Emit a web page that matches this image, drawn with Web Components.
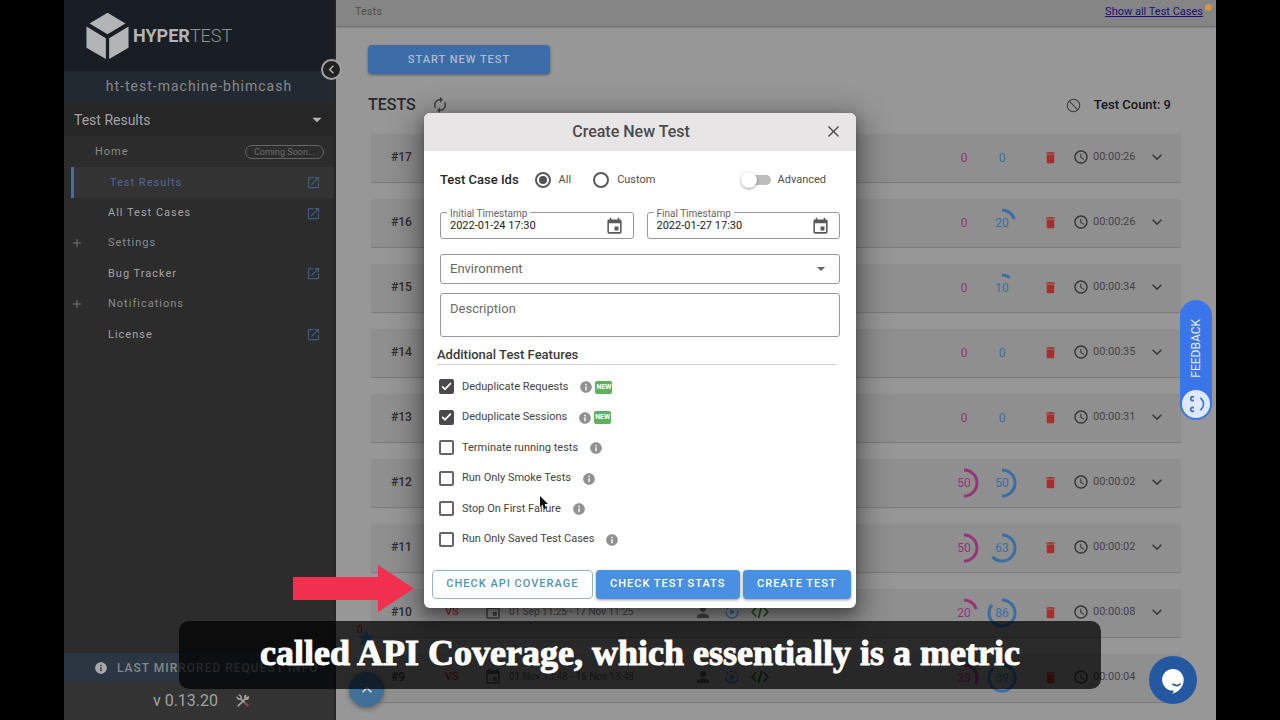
<!DOCTYPE html>
<html lang="en">
<head>
<meta charset="utf-8">
<meta name="viewport" content="width=device-width, initial-scale=1">
<title>HyperTest – Tests</title>
<style>
  html, body { margin: 0; height: 100%; background: #000; }
  body { font-family: Roboto, "Liberation Sans", sans-serif; font-size: 11px; line-height: 16px; overflow: hidden; }
</style>
</head>
<body>
<ht-app></ht-app>

<script>
const define = (name, html, setup) => {
  const template = document.createElement('template');
  template.innerHTML = html;
  customElements.define(name, class extends HTMLElement {
    connectedCallback() {
      if (this.shadowRoot) return;
      const root = this.attachShadow({ mode: 'open' });
      root.append(template.content.cloneNode(true));
      if (setup) setup(this, root);
    }
  });
};

/* ---------- icons ---------- */
const ICONS = {
  open: '<path d="M19 19H5V5h7V3H5c-1.11 0-2 .9-2 2v14c0 1.1.89 2 2 2h14c1.1 0 2-.9 2-2v-7h-2v7zM14 3v2h3.59l-9.83 9.83 1.41 1.41L19 6.41V10h2V3h-7z"/>',
  refresh: '<path d="M12 6v3l4-4-4-4v3c-4.42 0-8 3.58-8 8 0 1.57.46 3.03 1.24 4.26L6.7 14.8c-.45-.83-.7-1.79-.7-2.8 0-3.31 2.69-6 6-6zm6.76 1.74L17.3 9.2c.44.84.7 1.79.7 2.8 0 3.31-2.69 6-6 6v-3l-4 4 4 4v-3c4.42 0 8-3.58 8-8 0-1.57-.46-3.03-1.24-4.26z"/>',
  trash: '<path d="M6 19c0 1.1.9 2 2 2h8c1.1 0 2-.9 2-2V7H6v12zM19 4h-3.5l-1-1h-5l-1 1H5v2h14V4z"/>',
  clock: '<path d="M11.99 2C6.47 2 2 6.48 2 12s4.47 10 9.99 10C17.52 22 22 17.52 22 12S17.52 2 11.99 2zM12 20c-4.42 0-8-3.58-8-8s3.58-8 8-8 8 3.58 8 8-3.58 8-8 8zm.5-13H11v6l5.25 3.15.75-1.23-4.5-2.67z"/>',
  down: '<path d="M16.59 8.59L12 13.17 7.41 8.59 6 10l6 6 6-6z"/>',
  up: '<path d="M12 8l-6 6 1.41 1.41L12 10.83l4.59 4.58L18 14z"/>',
  left: '<path d="M15.41 7.41L14 6l-6 6 6 6 1.41-1.41L10.83 12z"/>',
  caret: '<path d="M5 8.500h14l-7 7z"/>',
  info: '<path d="M12 2C6.480 2 2 6.480 2 12s4.480 10 10 10 10-4.480 10-10S17.520 2 12 2zm1.200 15.500h-2.400v-7h2.400v7zm0-8.700h-2.400V6.500h2.400v2.300z"/>',
  calendar: '<path d="M17 12h-5v5h5v-5zM16 1v2H8V1H6v2H5c-1.11 0-1.990.9-1.990 2L3 19c0 1.100.890 2 2 2h14c1.100 0 2-.900 2-2V5c0-1.100-.900-2-2-2h-1V1h-2zm3 18H5V8h14v11z"/>',
  person: '<path d="M12 12c2.210 0 4-1.790 4-4s-1.790-4-4-4-4 1.790-4 4 1.790 4 4 4zm0 2c-2.670 0-8 1.340-8 4v2h16v-2c0-2.660-5.330-4-8-4z"/>',
  close: '<path d="M19 6.410L17.590 5 12 10.590 6.410 5 5 6.410 10.590 12 5 17.590 6.410 19 12 13.410 17.590 19 19 17.590 13.410 12z"/>',
  ban: '<g fill="none" stroke="currentColor" stroke-width="1.800"><circle cx="12" cy="12" r="10"/><path d="M5 5l14 14"/></g>',
  star: '<path d="M12 17.270L18.180 21l-1.640-7.030L22 9.240l-7.190-.610L12 2 9.190 8.630 2 9.240l5.460 4.730L5.820 21z"/>',
  plus: '<path d="M11 4h2v7h7v2h-7v7h-2v-7H4v-2h7z"/>',
  play: '<circle cx="12" cy="12" r="9" fill="none" stroke="currentColor" stroke-width="2" stroke-dasharray="28.300 3 4 3 4 3 4 3 4.200"/><path d="M9.500 7.500v9l7-4.500z"/>',
  code: '<path d="M7 6l-5.500 6L7 18M17 6l5.500 6-5.500 6M14 4l-4 16" fill="none" stroke="currentColor" stroke-width="2.200"/>',
  tools: '<g fill="none" stroke="currentColor" stroke-width="2.400"><path d="M8 8l9 9"/><path d="M3 5.500a4 4 0 0 0 5.500 3.500M5.500 3a4 4 0 0 1 3.500 5.500M21 5.500L16 8 4 20"/><path d="M17 3.500a4 4 0 0 0-2 5M20.500 7a4 4 0 0 1-5 2"/></g><path d="M14.500 14.500l5 5" stroke="#8e4442" stroke-width="4"/>',
  chat: '<path d="M12 2.500a9.300 9.300 0 1 0 0 18.600c.8 0 .8 1.400-.7 2.700 3.500-.7 9.900-4.400 9.900-12A9.300 9.300 0 0 0 12 2.500z"/><path d="M12 15.700c2 1.400 4.300 1.400 6-.1" fill="none" stroke="#2459a2" stroke-width="1.500" stroke-linecap="round"/>',
  smile: '<circle cx="12" cy="12" r="11.200" fill="#dfe9fc"/><g fill="none" stroke="#3b70cf" stroke-width="1.400" stroke-linecap="round"><path d="M9.800 6.300a1.500 1.500 0 1 0 0 2.800M9.800 14.900a1.500 1.500 0 1 0 0 2.800M16 7.500c2.600 2.700 2.600 6.300 0 9"/></g>',
  cube: '<path d="M12 .8l8.800 5.300L12 11.400 3.200 6.100zM1.700 7.600l9.500 5.700v10.200L1.700 18zM22.300 7.600V18l-9.500 5.500V13.300z"/>'
};
define('ht-icon', `
<style>
  :host { display: block; flex: none; width: var(--size, 16px); height: var(--size, 16px); }
  svg { display: block; width: 100%; height: 100%; fill: currentColor; }
</style>
<svg viewBox="0 0 24 24" aria-hidden="true"></svg>`,
(el, root) => { root.querySelector('svg').innerHTML = ICONS[el.getAttribute('name')]; });

/* ---------- button ---------- */
define('ht-button', `
<style>
  :host { display: block; }
  button {
    box-sizing: border-box; width: 100%; height: 29px; padding: 0 13px; border: 1px solid transparent; border-radius: 4px;
    background: var(--bg, #4a90e2); color: var(--fg, #fff); font: 500 11px/16px Roboto, sans-serif; letter-spacing: 1px;
    text-transform: uppercase; white-space: nowrap; box-shadow: 0 1px 3px rgba(0,0,0,.4);
  }
  :host([outlined]) button { background: #fff; color: #4f93b8; border-color: #8fb9c9; box-shadow: none; }
</style>
<button type="button"><slot></slot></button>`);

/* ---------- sidebar ---------- */
define('ht-nav-item', `
<style>
  :host { display: block; color: #8b8b8b; }
  a { box-sizing: border-box; height: 100%; display: flex; align-items: center; padding: 0 13px 0 7px; color: inherit; text-decoration: none; letter-spacing: 1px; font-size: 11px; }
  .lead { width: 37px; }
  .lead ht-icon { --size: 12px; color: #747474; }
  .text { flex: 1; }
  .open { --size: 15px; color: #3a5c85; }
  :host([bright]) { color: #a4a4a4; }
  :host([active]) { color: #54669b; background: #333; margin-left: 7px; border-left: 3px solid #4c6a9b; }
  :host([active]) a { padding-left: 0; }
  :host([active]) .lead { width: 36px; }
  :host([top]) .lead { width: 24px; }
  .pill { border: 1px solid #666; border-radius: 7px; padding: 0 8px; font-size: 9px; line-height: 12px; letter-spacing: 0; color: #6c6c6c; margin-right: -3px; }
</style>
<a href="#"><span class="lead"></span><span class="text"><slot></slot></span></a>`,
(el, root) => {
  const link = root.querySelector('a');
  if (el.hasAttribute('group')) root.querySelector('.lead').innerHTML = '<ht-icon name="plus"></ht-icon>';
  if (el.hasAttribute('open')) link.insertAdjacentHTML('beforeend', '<ht-icon class="open" name="open"></ht-icon>');
  if (el.hasAttribute('note')) {
    link.insertAdjacentHTML('beforeend', '<span class="pill"></span>');
    link.lastChild.textContent = el.getAttribute('note');
  }
});

define('ht-sidebar', `
<style>
  :host { display: flex; flex-direction: column; box-sizing: border-box; width: 272px; flex: none; background: #2c2c2c; border-right: 2px solid #262626; color: #a5a5a5; position: relative; }
  .brand { display: flex; align-items: center; gap: 1px; height: 71px; padding-left: 19px; background: #191e25; color: #b2b4b6; font-size: 18px; line-height: 24px; }
  .brand ht-icon { --size: 49px; }
  .brand b { font-weight: 700; }
  .brand span { font-weight: 300; color: #8f9296; }
  .machine { height: 30px; padding-bottom: 2px; display: flex; align-items: center; justify-content: center; background: #222930; color: #85898d; font-size: 14px; letter-spacing: 1px; }
  .section { display: flex; align-items: center; justify-content: space-between; width: 100%; height: 33px; border: 0; padding: 0 9px 0 10px; background: #262626; color: #a2a2a2; font: 14px/16px Roboto, sans-serif; }
  .section ht-icon { color: #b5b5b5; }
  nav { display: grid; grid-auto-rows: 1fr; height: 213px; margin-top: 1px; }
  .mirror { margin-top: auto; display: flex; align-items: center; gap: 9px; width: 100%; height: 29px; border: 0; padding: 0 30px; background: #2b3642; color: #83888d; font: 500 12px/16px Roboto, sans-serif; letter-spacing: 1px; white-space: nowrap; }
  .mirror ht-icon { --size: 14px; color: #a8a8a8; }
  .version { height: 38px; padding-left: 6px; display: flex; align-items: center; justify-content: center; gap: 17px; background: #333; color: #a2a2a2; font-size: 16px; }
  .toggle { position: absolute; right: -8px; top: 59px; box-sizing: border-box; width: 21px; height: 21px; padding: 0; border: 2px solid #a2a2a2; border-radius: 50%; background: #222; color: #b5b5b5; display: grid; place-items: center; z-index: 2; }
  .toggle ht-icon { --size: 17px; }
</style>
<div class="brand"><ht-icon name="cube"></ht-icon><div><b>HYPER</b><span>TEST</span></div></div>
<div class="machine">ht-test-machine-bhimcash</div>
<button class="section" type="button">Test Results<ht-icon name="caret"></ht-icon></button>
<nav>
  <ht-nav-item top note="Coming Soon...">Home</ht-nav-item>
  <ht-nav-item active open>Test Results</ht-nav-item>
  <ht-nav-item bright open>All Test Cases</ht-nav-item>
  <ht-nav-item group>Settings</ht-nav-item>
  <ht-nav-item bright open>Bug Tracker</ht-nav-item>
  <ht-nav-item group>Notifications</ht-nav-item>
  <ht-nav-item bright open>License</ht-nav-item>
</nav>
<button class="mirror" type="button"><ht-icon name="info"></ht-icon>LAST MIRRORED REQUEST INFO</button>
<div class="version">v 0.13.20<ht-icon name="tools"></ht-icon></div>
<button class="toggle" type="button" aria-label="Collapse sidebar"><ht-icon name="left"></ht-icon></button>`);

/* ---------- test list ---------- */
define('ht-donut', `
<style>
  :host { display: grid; width: 30px; height: 30px; place-items: center; font-size: 12px; }
  svg, span { grid-area: 1 / 1; }
  svg { width: 30px; height: 30px; fill: none; stroke: currentColor; stroke-width: 3; }
</style>
<svg viewBox="0 0 30 30" aria-hidden="true"><circle cx="15" cy="15" r="13" pathLength="100" transform="rotate(-90 15 15)"/></svg>
<span></span>`,
(el, root) => {
  const v = el.getAttribute('value');
  root.querySelector('span').textContent = v;
  const ring = root.querySelector('circle');
  if (v === '0') ring.remove();
  else ring.setAttribute('stroke-dasharray', v + ' 100');
});

define('ht-test-row', `
<style>
  :host { display: grid; grid-template-columns: 54px 42px 22px 185px 30px 27px 1fr 38px 52px 34px 20px 54px 22px; align-items: center; box-sizing: border-box;
    height: 49px; padding: 0 12px 2px 20px; background: #8f8f8f; border-bottom: 1px solid #7b7b7b; border-radius: 2px; color: #444; box-shadow: 0 0 2px rgba(0,0,0,.06); }
  .id { font-weight: 500; font-size: 12px; color: #2d2d2d; }
  .vs { font-weight: 500; color: #8c2b2b; }
  .cal { --size: 18px; margin-left: -3px; }
  .date { white-space: nowrap; font-size: 10px; }
  .person { --size: 18px; }
  .play { --size: 16px; color: #2f61a8; }
  .code { --size: 18px; color: #1f5216; }
  .fail ht-donut { color: #96337a; }
  .pass ht-donut { color: #386da6; }
  .trash { --size: 15px; color: #a52f2d; margin-left: 4px; }
  .clock { --size: 16px; color: #333; }
  .more { --size: 20px; color: #3b3b3b; }
  button { all: unset; display: block; }
  ht-donut { margin-top: 2px; }
</style>
<span class="id"></span>
<span class="vs"></span>
<span class="calbox"></span>
<span class="date"></span>
<span class="a"></span><span class="b"></span><span class="c"></span>
<span class="fail"></span>
<span class="pass"></span>
<button type="button" aria-label="Delete test"><ht-icon class="trash" name="trash"></ht-icon></button>
<ht-icon class="clock" name="clock"></ht-icon>
<span class="time"></span>
<button type="button" aria-label="Show details"><ht-icon class="more" name="down"></ht-icon></button>`,
(el, root) => {
  const $ = s => root.querySelector(s);
  $('.id').textContent = '#' + el.getAttribute('number');
  $('.time').textContent = el.getAttribute('time');
  for (const kind of ['fail', 'pass']) {
    const donut = document.createElement('ht-donut');
    donut.setAttribute('value', el.getAttribute(kind));
    $('.' + kind).append(donut);
  }
  if (el.hasAttribute('dates')) {
    $('.vs').textContent = 'VS';
    $('.date').textContent = el.getAttribute('dates');
    $('.calbox').innerHTML = '<ht-icon class="cal" name="calendar"></ht-icon>';
    $('.a').innerHTML = '<ht-icon class="person" name="person"></ht-icon>';
    $('.b').innerHTML = '<ht-icon class="play" name="play"></ht-icon>';
    $('.c').innerHTML = '<ht-icon class="code" name="code"></ht-icon>';
  }
});

define('ht-main', `
<style>
  :host { display: block; flex: 1; min-width: 0; background: #979797; color: #2a2a2a; }
  header { display: flex; justify-content: space-between; align-items: center; height: 26px; padding: 0 13px 3px 19px; box-sizing: border-box; background: #858585; box-shadow: 0 1px 2px rgba(0,0,0,.35); color: #505050; }
  header a { color: #1a1077; }
  .start { width: 182px; margin: 19px 0 0 32px; --bg: #3d6da8; --fg: #a9bcd2; }
  .head { display: flex; align-items: center; margin: 19px 45px 17px 32px; height: 24px; }
  h1 { margin: 0 15px 0 0; font-size: 16px; line-height: 24px; font-weight: 500; }
  .head ht-icon { color: #3f3f3f; --size: 18px; }
  .head .ban { margin-left: auto; --size: 15px; margin-right: 13px; }
  .count { font-size: 13px; font-weight: 500; color: #161616; }
  .list { display: grid; gap: 16px; margin: 0 35px; }
</style>
<header><span>Tests</span><a href="#">Show all Test Cases</a></header>
<ht-button class="start">Start new test</ht-button>
<div class="head"><h1>TESTS</h1><ht-icon name="refresh"></ht-icon><ht-icon class="ban" name="ban"></ht-icon><span class="count">Test Count: 9</span></div>
<div class="list">
  <ht-test-row number="17" fail="0" pass="0" time="00:00:26"></ht-test-row>
  <ht-test-row number="16" fail="0" pass="20" time="00:00:26"></ht-test-row>
  <ht-test-row number="15" fail="0" pass="10" time="00:00:34"></ht-test-row>
  <ht-test-row number="14" fail="0" pass="0" time="00:00:35"></ht-test-row>
  <ht-test-row number="13" fail="0" pass="0" time="00:00:31"></ht-test-row>
  <ht-test-row number="12" fail="50" pass="50" time="00:00:02"></ht-test-row>
  <ht-test-row number="11" fail="50" pass="63" time="00:00:02"></ht-test-row>
  <ht-test-row number="10" fail="20" pass="86" time="00:00:08" dates="01 Sep 11:25 - 17 Nov 11:25"></ht-test-row>
  <ht-test-row number="9" fail="33" pass="89" time="00:00:04" dates="01 Nov 13:48 - 16 Nov 13:48"></ht-test-row>
</div>`);

/* ---------- dialog ---------- */
define('ht-time-field', `
<style>
  :host { display: block; flex: 1; min-width: 0; }
  .box { position: relative; box-sizing: border-box; display: flex; align-items: center; height: 27px; padding: 0 9px; border: 1px solid #999; border-radius: 3px; }
  label { position: absolute; left: 6px; top: -5px; padding: 0 3px; background: #fff; color: #666; font-size: 10px; line-height: 11px; }
  input { flex: 1; min-width: 0; position: relative; border: 0; padding: 2px 0 0; background: none; color: #222; font: 11px/16px Roboto, sans-serif; outline: 0; }
  ht-icon { --size: 19px; color: #5a5a5a; margin: 3px 0 0; }
</style>
<div class="box"><label for="t"></label><input id="t" type="text"><ht-icon name="calendar"></ht-icon></div>`,
(el, root) => {
  root.querySelector('label').textContent = el.getAttribute('label');
  root.querySelector('input').setAttribute('value', el.getAttribute('value'));
});

define('ht-feature', `
<style>
  :host { display: flex; align-items: center; color: #444; }
  input { appearance: none; flex: none; box-sizing: border-box; width: 15px; height: 15px; margin: 0 8px 0 0; border: 2px solid #666; border-radius: 2px; display: grid; place-items: center; }
  input:checked { background: #4a4a4c; border-color: #4a4a4c; }
  input:checked::before { content: ""; width: 11px; height: 11px; background: #fff; clip-path: polygon(5% 52%, 16% 41%, 36% 61%, 84% 12%, 95% 23%, 36% 83%); }
  ht-icon { --size: 14px; color: #919191; margin: 1px 0 0 11px; }
  .new { margin: 1px 0 0 2px; width: 17px; height: 13px; border-radius: 2px; background: #5db25b; color: #fff; font-size: 7px; line-height: 13px; font-weight: 700; text-align: center; }
</style>
<input id="c" type="checkbox"><label for="c"><slot></slot></label><ht-icon name="info"></ht-icon>`,
(el, root) => {
  if (el.hasAttribute('checked')) root.querySelector('input').setAttribute('checked', '');
  if (el.hasAttribute('new')) root.append(Object.assign(document.createElement('span'), { className: 'new', textContent: 'NEW' }));
});

define('ht-dialog', `
<style>
  :host { display: block; width: 432px; max-width: 100%; border-radius: 6px; background: #fff; overflow: hidden; box-shadow: 0 9px 30px 8px rgba(0,0,0,.32), 0 5px 12px rgba(0,0,0,.3); color: #505050; }
  header { display: flex; align-items: center; height: 38px; padding: 0 13px 0 14px; background: #e7e5e6; }
  h2 { flex: 1; margin: 0; text-align: center; font-size: 16px; line-height: 24px; font-weight: 500; color: #4b4b4b; }
  header button { all: unset; }
  header ht-icon { --size: 19px; color: #555; }
  form { margin: 0; padding: 14px 16px 0; }
  .ids { display: flex; align-items: center; height: 30px; }
  .ids b { font-weight: 500; font-size: 13px; color: #262626; margin-right: 16px; }
  input[type=radio] { appearance: none; box-sizing: border-box; width: 16px; height: 16px; margin: 0 8px 0 0; border: 2px solid #5a5a5a; border-radius: 50%; display: grid; place-items: center; }
  input[type=radio]:checked::before { content: ""; width: 8px; height: 8px; border-radius: 50%; background: #505050; }
  .all { margin-right: 22px; }
  .switch { appearance: none; width: 26px; height: 10px; border-radius: 5px; background: #bdbdbd; margin: 0 7px 0 auto; position: relative; }
  .switch::before { content: ""; position: absolute; left: -4px; top: -3px; width: 16px; height: 16px; border-radius: 50%; background: #fff; box-shadow: 0 1px 3px rgba(0,0,0,.4); }
  .adv { margin-right: 14px; }
  .times { display: flex; gap: 13px; margin-top: 17px; }
  select, textarea { display: block; box-sizing: border-box; width: 100%; border: 1px solid #999; border-radius: 3px; background: #fff; color: #666; font: 13px/16px Roboto, sans-serif; outline: 0; padding: 0 9px; }
  .select { margin-top: 15px; display: grid; align-items: center; }
  .select > * { grid-area: 1 / 1; }
  .select ht-icon { justify-self: end; margin-right: 12px; --size: 14px; pointer-events: none; color: #666; }
  select { appearance: none; height: 30px; }
  textarea { margin-top: 9px; height: 44px; padding-top: 7px; resize: none; overflow: hidden; }
  textarea::placeholder { color: #6c6c6c; opacity: 1; }
  h3 { margin: 9px 0 0 -3px; width: 400px; max-width: 100%; height: 18px; border-bottom: 1px solid #d4d4d4; font-size: 13px; line-height: 17px; font-weight: 500; color: #3a3a3a; }
  .features { display: grid; grid-auto-rows: 1fr; height: 183px; margin: 7px 0 0 -1px; }
  .actions { display: flex; gap: 3px; margin: 15px -11px 0 -8px; padding-bottom: 9px; }
  .actions ht-button { flex: auto; }
</style>
<header><h2>Create New Test</h2><button type="button" aria-label="Close"><ht-icon name="close"></ht-icon></button></header>
<form>
  <div class="ids">
    <b>Test Case Ids</b>
    <input type="radio" name="ids" id="all" checked><label for="all" class="all">All</label>
    <input type="radio" name="ids" id="custom"><label for="custom">Custom</label>
    <input type="checkbox" role="switch" class="switch" id="adv"><label for="adv" class="adv">Advanced</label>
  </div>
  <div class="times">
    <ht-time-field label="Initial Timestamp" value="2022-01-24 17:30"></ht-time-field>
    <ht-time-field label="Final Timestamp" value="2022-01-27 17:30"></ht-time-field>
  </div>
  <div class="select"><select aria-label="Environment"><option>Environment</option></select><ht-icon name="caret"></ht-icon></div>
  <textarea aria-label="Description" placeholder="Description"></textarea>
  <h3>Additional Test Features</h3>
  <div class="features">
    <ht-feature checked new>Deduplicate Requests</ht-feature>
    <ht-feature checked new>Deduplicate Sessions</ht-feature>
    <ht-feature>Terminate running tests</ht-feature>
    <ht-feature>Run Only Smoke Tests</ht-feature>
    <ht-feature>Stop On First Failure</ht-feature>
    <ht-feature>Run Only Saved Test Cases</ht-feature>
  </div>
  <div class="actions">
    <ht-button outlined>Check API Coverage</ht-button>
    <ht-button>Check Test Stats</ht-button>
    <ht-button>Create Test</ht-button>
  </div>
</form>`);

/* ---------- floating items ---------- */
define('ht-feedback', `
<style>
  :host { display: block; }
  button { display: flex; align-items: center; justify-content: space-between; flex-direction: column; box-sizing: border-box; width: 32px; height: 120px; padding: 19px 0 1px; border: 0; border-radius: 16px; background: #3a76ea; color: #e6eefc; font: 12px/16px Roboto, sans-serif; }
  span { writing-mode: vertical-rl; transform: rotate(180deg); }
  ht-icon { --size: 30px; }
</style>
<button type="button"><span>FEEDBACK</span><ht-icon name="smile"></ht-icon></button>`);

define('ht-subtitle', `
<style>
  :host { display: flex; align-items: center; justify-content: center; box-sizing: border-box; height: 68px; padding-bottom: 4px; border-radius: 10px; background: rgba(0,0,0,.72); color: #fff; font: 700 36px/40px "Liberation Serif", serif; white-space: nowrap; -webkit-text-stroke: 1px #fff; }
</style>
<slot></slot>`);

define('ht-app', `
<style>
  :host { display: block; height: 100vh; padding: 0 5%; background: #000; box-sizing: border-box; }
  .frame { position: relative; display: flex; height: 100%; overflow: hidden; }
  .scrim { position: absolute; inset: 0; display: grid; place-items: center; }
  .dot { position: absolute; right: 4px; top: 4px; width: 7px; height: 7px; border-radius: 50%; background: #d6953f; }
  ht-feedback { position: absolute; right: 4px; top: 300px; }
  .top { position: absolute; left: 285px; bottom: 13px; width: 35px; height: 35px; padding: 0; border: 0; border-radius: 50%; background: #406f98; color: #d3dee8; display: grid; place-items: center; box-shadow: 0 2px 5px rgba(0,0,0,.35); --size: 20px; }
  .fav { position: absolute; left: 292px; bottom: 72px; color: #3a7da6; --size: 20px; }
  .favcount { position: absolute; left: 293px; bottom: 82px; color: #b02626; font-size: 10px; font-weight: 500; }
  .arrow { position: absolute; left: 229px; top: 565px; width: 121px; height: 47px; fill: #f0304e; }
  .pointer { position: absolute; left: 475px; top: 495px; width: 11px; height: 15px; }
  ht-subtitle { position: absolute; left: 10%; right: 10%; bottom: 31px; }
  .chat { position: absolute; right: 19px; bottom: 16px; width: 48px; height: 48px; padding: 0; border: 0; border-radius: 50%; background: #2459a2; color: #fff; display: grid; place-items: center; --size: 28px; }
</style>
<div class="frame">
  <ht-sidebar></ht-sidebar>
  <ht-main></ht-main>
  <span class="dot"></span>
  <button class="top" type="button" aria-label="Back to top"><ht-icon name="up"></ht-icon></button>
  <ht-icon class="fav" name="star"></ht-icon><span class="favcount">0</span>
  <div class="scrim"><ht-dialog role="dialog" aria-label="Create New Test"></ht-dialog></div>
  <ht-feedback></ht-feedback>
  <svg class="arrow" viewBox="0 0 121 47" aria-hidden="true"><path d="M0 12h85V0l36 23.500L85 47V35H0z"/></svg>
  <svg class="pointer" viewBox="0 0 11 15" aria-hidden="true"><path d="M1 1v11l2.500-2.300L5.300 14l2-.8-1.800-4.100H9z" fill="#111"/></svg>
  <ht-subtitle>called API Coverage, which essentially is a metric</ht-subtitle>
  <button class="chat" type="button" aria-label="Open chat"><ht-icon name="chat"></ht-icon></button>
</div>`);
</script>
</body>
</html>
